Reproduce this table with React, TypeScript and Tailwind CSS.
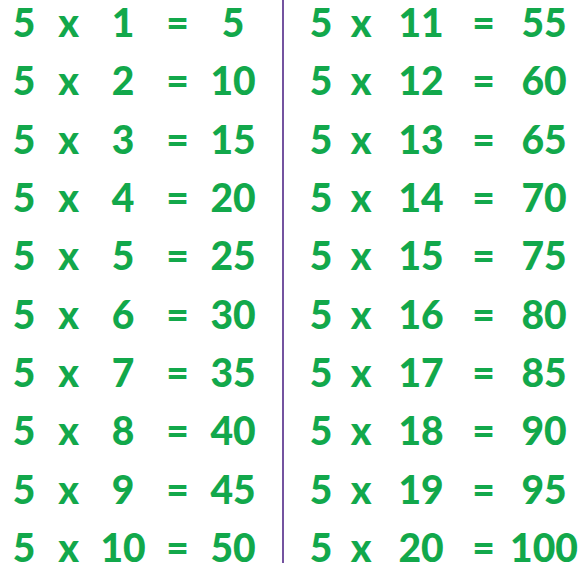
import React from "react";

const left = Array.from({ length: 10 }, (_, i) => i + 1);
const right = Array.from({ length: 10 }, (_, i) => i + 11);

function Cell({ w, children }: { w: string; children: React.ReactNode }) {
  return <div className={`${w} flex justify-center shrink-0`}>{children}</div>;
}

export default function App() {
  return (
    <div
      className="w-[585px] h-[563px] overflow-hidden bg-white text-[#12a84b] font-black text-[39px]"
      style={{ fontFamily: "Lato, 'Open Sans', sans-serif" }}
    >
      <div className="flex -mt-[7px]">
        <div className="w-[282px] shrink-0 flex flex-col">
          {left.map((n) => (
            <div key={n} className="flex h-[58.33px] leading-[58.33px]">
              <Cell w="w-[48px]">5</Cell>
              <Cell w="w-[41px]">x</Cell>
              <Cell w="w-[68px]">{n}</Cell>
              <Cell w="w-[41px]">=</Cell>
              <Cell w="w-[70px]">{5 * n}</Cell>
            </div>
          ))}
        </div>
        <div className="w-[2px] shrink-0 bg-[#7453a0] mt-[7px]" />
        <div className="flex-1 flex flex-col pl-[14px]">
          {right.map((n) => (
            <div key={n} className="flex h-[58.33px] leading-[58.33px]">
              <Cell w="w-[46px]">5</Cell>
              <Cell w="w-[34px]">x</Cell>
              <Cell w="w-[86px]">{n}</Cell>
              <Cell w="w-[39px]">=</Cell>
              <Cell w="w-[82px]">{5 * n}</Cell>
            </div>
          ))}
        </div>
      </div>
    </div>
  );
}
